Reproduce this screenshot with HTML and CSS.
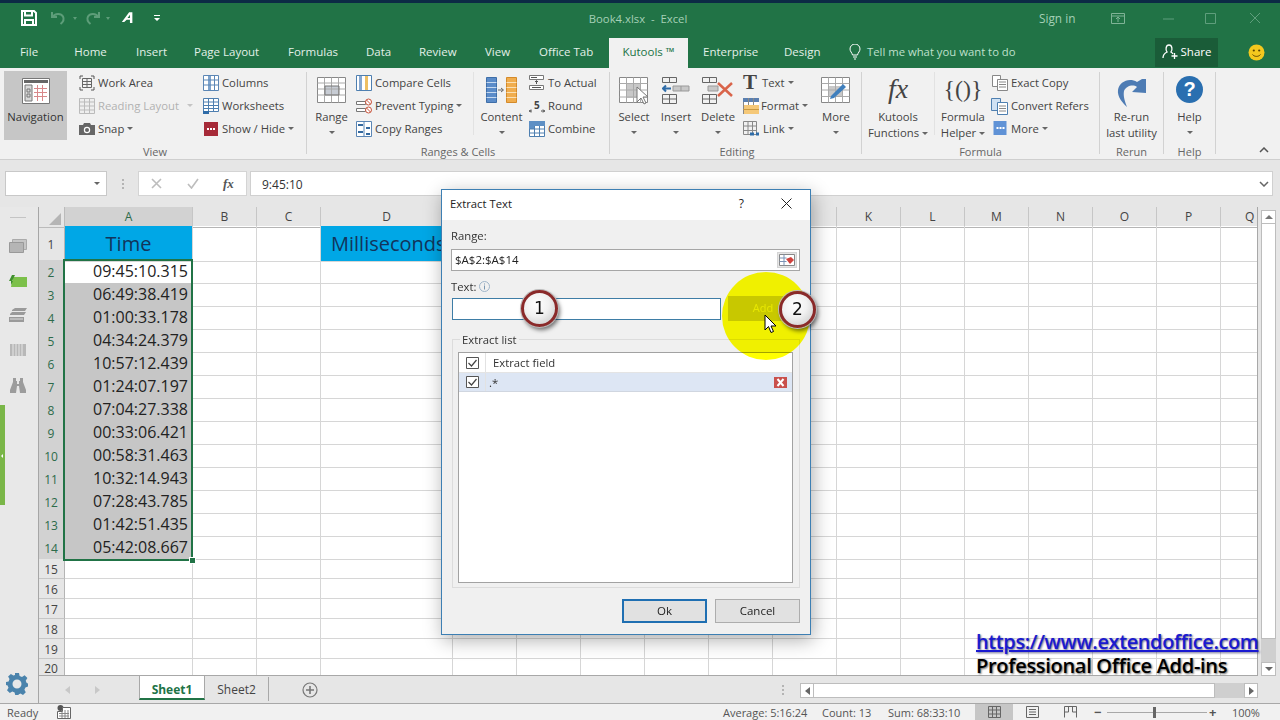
FILE: index.html
```html
<!DOCTYPE html>
<html lang="en">
<head>
<meta charset="utf-8">
<title>Book4.xlsx - Excel</title>
<link rel="stylesheet" href="styles.css">
</head>
<body>
<div class="app">
  <div class="strip"></div>
  <header class="titlebar">
    <div class="qat">
      <svg class="q-save" width="16" height="16" viewBox="0 0 16 16"><path d="M1 1h12l2 2v12H1zM4 1.500v4h7v-4M4 15v-5h8v5" fill="none" stroke="#fff" stroke-width="2"/></svg>
      <svg class="q-undo" width="18" height="16" viewBox="0 0 18 16"><path d="M2 2v5h5M2.500 7C5 3 11 3 13 6.500 14.500 9.500 13 12 10.500 14" fill="none" stroke="#5d9d79" stroke-width="2"/></svg>
      <i class="q-caret dim"></i>
      <svg class="q-redo" width="18" height="16" viewBox="0 0 18 16"><path d="M16 2v5h-5M15.500 7C13 3 7 3 5 6.500 3.500 9.500 5 12 7.500 14" fill="none" stroke="#5d9d79" stroke-width="2"/></svg>
      <i class="q-caret dim"></i>
      <svg class="q-a" width="13" height="14" viewBox="0 0 16 16"><path d="M1 13 10 1h4v13h-3v-4H7l-3 3zM8 8h3V4z" fill="#fff" fill-rule="evenodd"/></svg>
      <svg class="q-more" width="8" height="8" viewBox="0 0 8 8"><path d="M1 1h6v1H1zM1 4h6L4 7z" fill="#fff"/></svg>
    </div>
    <div class="doc">Book4.xlsx&nbsp; - &nbsp;Excel</div>
    <div class="win">
      <span class="signin">Sign in</span>
      <svg class="w1" width="14" height="11" viewBox="0 0 14 11"><path d="M.5.500h13v10H.500zM.5 3h13M7 9V4.500M5 6l2-2 2 2" fill="none" stroke="#7fb396"/></svg>
      <svg class="w2" width="11" height="11" viewBox="0 0 11 11"><path d="M0 6h11" stroke="#5f9e7c"/></svg>
      <svg class="w3" width="11" height="11" viewBox="0 0 11 11"><path d="M.5.500h10v10H.500z" fill="none" stroke="#5f9e7c"/></svg>
      <svg class="w4" width="12" height="12" viewBox="0 0 12 12"><path d="M1 1l10 10M11 1 1 11" stroke="#5f9e7c"/></svg>
    </div>
  </header>
  <nav class="tabs">
    <span class="t t-file">File</span>
    <span class="t t-home">Home</span>
    <span class="t t-ins">Insert</span>
    <span class="t t-pl">Page Layout</span>
    <span class="t t-for">Formulas</span>
    <span class="t t-data">Data</span>
    <span class="t t-rev">Review</span>
    <span class="t t-view">View</span>
    <span class="t t-ot">Office Tab</span>
    <span class="t t-active">Kutools ™</span>
    <span class="t t-ent">Enterprise</span>
    <span class="t t-des">Design</span>
    <svg class="bulb" width="12" height="16" viewBox="0 0 12 16"><path d="M3.500 11C3 8.500 1 7.500 1 5a5 5 0 0 1 10 0c0 2.500-2 3.500-2.500 6zM4 13h4M5 15h2" fill="none" stroke="#fff"/></svg>
    <span class="tell">Tell me what you want to do</span>
    <span class="share"><svg width="16" height="17" viewBox="0 0 16 17"><path d="M1 15c0-4 2-5 4-6C3.500 7.500 3.500 2 7 2s3.500 5.500 2 7c1 .5 1.500 1 2 2M12.500 10v6M9.500 13h6" fill="none" stroke="#fff" stroke-width="1.300"/></svg>Share</span>
    <span class="smile"><svg width="17" height="17" viewBox="0 0 17 17"><circle cx="8.500" cy="8.500" r="8" fill="#f3c81e"/><circle cx="5.800" cy="6.500" r="1.100" fill="#5a4300"/><circle cx="11.200" cy="6.500" r="1.100" fill="#5a4300"/><path d="M4.500 10.500c2 2.500 6 2.500 8 0" fill="none" stroke="#5a4300"/></svg></span>
  </nav>

  <section class="ribbon">
    <div class="group g-view">
      <div class="tools">
        <div class="large l-nav">
          <span class="big"><svg width="28" height="26" viewBox="0 0 28 26"><path fill="#fff" stroke="#777" d="M.5.500h27v25H.500z"/><path fill="#666" d="M2 2h24v3H2z"/><path fill="#d9d9d9" stroke="#777" d="M3 7h7v16H3z"/><path fill="none" stroke="#777" d="M5 11h3v3H5zM5 16h3v3H5z"/><path fill="none" stroke="#d8888a" d="M12 10.500h13M12 14.500h13M12 18.500h13M15.500 7v16M20.500 7v16"/></svg></span>
          <span class="lbl">Navigation</span>
        </div>
        <div class="col c-view1">
          <div class="tool"><svg class="ic" width="16" height="16" viewBox="0 0 16 16"><path d="M1 4V1h3M12 1h3v3M15 12v3h-3M4 15H1v-3" fill="none" stroke="#555"/><path d="M3.500 3.500h9v9h-9zM3.500 6.500h9M3.500 9.500h9M8 3.500v9" fill="none" stroke="#666"/></svg>Work Area</div>
          <div class="tool off"><svg class="ic" width="16" height="16" viewBox="0 0 16 16"><path d="M.5.500h15v15H.500zM.5 8h15M5.500.500v15M10.500.500v15M.5 4h15M.5 12h15" fill="#eee" stroke="#bbb"/></svg>Reading Layout<i class="caret pale wide"></i></div>
          <div class="tool"><svg class="ic" width="16" height="16" viewBox="0 0 16 16"><path d="M0 4h4l1-2h6l1 2h4v10H0z" fill="#666"/><circle cx="8" cy="9" r="3.200" fill="#fff"/><circle cx="8" cy="9" r="2" fill="#666"/></svg>Snap<i class="caret"></i></div>
        </div>
        <div class="col">
          <div class="tool"><svg class="ic" width="16" height="16" viewBox="0 0 16 16"><path fill="#fff" stroke="#5b86b5" d="M.5.500h15v15H.500z"/><path fill="#7ea3cc" d="M5 1h3v14H5z"/><path d="M.5 5h15M.5 10h15M11.500.500v15" stroke="#5b86b5"/></svg>Columns</div>
          <div class="tool"><svg class="ic" width="16" height="16" viewBox="0 0 16 16"><path fill="#fff" stroke="#4e7fb0" d="M.5.500h15v13H.500z"/><path d="M.5 4h15M.5 7.500h15M.5 10.500h15M5.500.500v13M10.500.500v13" stroke="#4e7fb0"/><path fill="#2f6ca8" d="M0 13h6v3H0z"/></svg>Worksheets</div>
          <div class="tool"><svg class="ic" width="16" height="16" viewBox="0 0 16 16"><path fill="#a62a38" d="M1 1h14v14H1z"/><path fill="#fff" d="M4 7h2v2H4zM7 7h2v2H7zM10 7h2v2h-2z"/></svg>Show / Hide<i class="caret"></i></div>
        </div>
      </div>
      <div class="glabel">View</div>
    </div>
    <div class="sep"></div>
    <div class="group g-range">
      <div class="tools">
        <div class="large l-range">
          <span class="big"><svg width="30" height="26" viewBox="0 0 30 26"><path fill="#fff" stroke="#888" d="M.5.500h28v25H.500z"/><path fill="#c7ccd4" d="M8 9h14v9H8z"/><path fill="none" stroke="#aaa" d="M.5 6h28M.5 12h28M.5 18h28M7.500.500v25M14.500.500v25M21.500.500v25"/><path fill="none" stroke="#777" d="M8 9h14v9H8z"/></svg></span>
          <span class="lbl">Range</span>
          <i class="caret block"></i>
        </div>
        <div class="col c-range">
          <div class="tool"><svg class="ic" width="16" height="16" viewBox="0 0 16 16"><path fill="#fff" stroke="#4e7fb0" d="M.5.500h15v15H.500z"/><path fill="#86a7cf" d="M3 1h3v14H3z"/><path fill="#eebf63" d="M9 1h3v14H9z"/></svg>Compare Cells</div>
          <div class="tool"><svg class="ic" width="16" height="16" viewBox="0 0 16 16"><path d="M.5 3.500h9v3h-9zM.5 10.500h9v3h-9z" fill="#fff" stroke="#777"/><circle cx="12.500" cy="4" r="3" fill="#fff" stroke="#c8553d"/><circle cx="12.500" cy="12" r="3" fill="#fff" stroke="#c8553d"/><path d="M10.500 2l4 4M10.500 10l4 4" stroke="#c8553d"/></svg>Prevent Typing<i class="caret"></i></div>
          <div class="tool"><svg class="ic" width="16" height="16" viewBox="0 0 16 16"><path fill="#fff" stroke="#5b86b5" d="M.5.500h15v15H.500z"/><path d="M2 3h5v2H2zM2 10h5v2H2zM10 6h4v2h-4zM10 12h4v2h-4z" fill="#33689e"/><path d="M8 .5v15" stroke="#5b86b5"/></svg>Copy Ranges</div>
        </div>
        <div class="subsep"></div>
        <div class="large l-content">
          <span class="big"><svg width="32" height="26" viewBox="0 0 32 26"><path fill="#5b8cc9" stroke="#3e6ea8" d="M.5.500h10v25H.500z"/><path fill="#f0ad4e" stroke="#d48a2a" d="M20.500.500h10v25h-10z"/><path d="M.5 5.500h10M.5 10.500h10M.5 15.500h10M.5 20.500h10" stroke="#c7daf0"/><path d="M20.500 5.500h10M20.500 10.500h10M20.500 15.500h10M20.500 20.500h10" stroke="#fae0b5"/><path d="M12 13h5M15 11l2.500 2-2.500 2" fill="none" stroke="#666"/></svg></span>
          <span class="lbl">Content</span>
          <i class="caret block"></i>
        </div>
        <div class="col">
          <div class="tool"><svg class="ic" width="16" height="16" viewBox="0 0 16 16"><path d="M.5.500h14v4H.500zM.5 10.500h14v4H.500z" fill="#fff" stroke="#777"/><path d="M2 2.500h6M3 12.500h9" stroke="#555"/><path d="M7.500 6v3M6 7l1.500-1.500L9 7" fill="none" stroke="#555"/></svg>To Actual</div>
          <div class="tool"><svg class="ic" width="16" height="16" viewBox="0 0 16 16"><text x="5" y="11" class="five">5</text><path d="M0 13h3M2 11.500 .5 13 2 14.500M12 13h4M14 11.500l1.500 1.500-1.500 1.500" fill="none" stroke="#444"/></svg>Round</div>
          <div class="tool"><svg class="ic" width="16" height="16" viewBox="0 0 16 16"><path fill="#fff" stroke="#4e7fb0" d="M.5.500h15v15H.500z"/><path fill="#5e8fc4" d="M0 0h16v5H0zM0 5h6v3H0z"/><path d="M.5 8h15M.5 12h15M5.500 5v11M10.500 5v11" stroke="#4e7fb0"/></svg>Combine</div>
        </div>
      </div>
      <div class="glabel">Ranges &amp; Cells</div>
    </div>
    <div class="sep"></div>
    <div class="group g-edit">
      <div class="tools">
        <div class="large l-edit">
          <span class="big"><svg width="30" height="28" viewBox="0 0 30 28"><path fill="#fff" stroke="#888" d="M.5.500h28v25H.500z"/><path fill="#c8c8c8" d="M8 7h13v14H8z"/><path fill="none" stroke="#aaa" d="M.5 6.500h28M.5 13h28M.5 20h28M7.500.500v25M14.500.500v25M21.500.500v25"/><path d="M18 10v15l4-4 3 6 2-1-3-6h5z" fill="#fff" stroke="#777"/></svg></span>
          <span class="lbl">Select</span>
          <i class="caret block"></i>
        </div>
        <div class="large l-edit">
          <span class="big"><svg width="28" height="28" viewBox="0 0 28 28"><path fill="none" stroke="#666" d="M.5.500h14v5H.500zM7.500.500v5M.5 17.500h14v9H.500zM.5 22h14M7.500 17.500v9"/><path d="M11 9h16v5H11z" fill="#c8c8c8" stroke="#999"/><path d="M19 9v5" stroke="#999"/><path d="M9 11.500H1M4 8.500l-3 3 3 3" fill="none" stroke="#2f6ca8" stroke-width="2"/></svg></span>
          <span class="lbl">Insert</span>
          <i class="caret block"></i>
        </div>
        <div class="large l-edit">
          <span class="big"><svg width="32" height="28" viewBox="0 0 32 28"><path fill="none" stroke="#666" d="M.5.500h14v5H.500zM7.500.500v5M.5 17.500h14v9H.500zM.5 22h14M7.500 17.500v9"/><path d="M6 9h10v5H6z" fill="#c8c8c8" stroke="#999"/><path d="M16 6l14 13M30 6 16 19" stroke="#d9644a" stroke-width="2.500"/></svg></span>
          <span class="lbl">Delete</span>
          <i class="caret block"></i>
        </div>
        <div class="col c-edit">
          <div class="tool"><span class="bigt">T</span>Text<i class="caret"></i></div>
          <div class="tool"><svg class="ic ic-w" width="16" height="16" viewBox="0 0 16 16"><path fill="#f5c878" d="M0 0h16v16H0z"/><path fill="#5a7fb0" d="M0 0h16v4H0z"/><path fill="#fff" d="M0 4h16v3H0z"/><path d="M.5 4v12M5.500 0v7M10.500 0v7" stroke="#888"/><path d="M0 11.500h16" stroke="#c99a42"/></svg>Format<i class="caret"></i></div>
          <div class="tool"><svg class="ic ic-w" width="18" height="16" viewBox="0 0 18 16"><path fill="none" stroke="#888" d="M.5.500h13v13H.500zM.5 5h13M.5 9.500h13M5 .500v13M9.500 .500v13"/><path d="M7 13h4M13 13h3" stroke="#2f6ca8" stroke-width="3"/></svg>Link<i class="caret"></i></div>
        </div>
        <div class="large l-more">
          <span class="big"><svg width="30" height="26" viewBox="0 0 30 26"><path fill="#fff" stroke="#888" d="M.5.500h28v25H.500z"/><path fill="#c8c8c8" d="M8 9h14v10H8z"/><path fill="none" stroke="#aaa" d="M.5 6.500h28M.5 13h28M.5 19.500h28M7.500.500v25M14.500.500v25M21.500.500v25"/><path d="M10 19l12-12 3 3-12 11-4 1z" fill="#3f7fbd"/></svg></span>
          <span class="lbl">More</span>
          <i class="caret block"></i>
        </div>
      </div>
      <div class="glabel">Editing</div>
    </div>
    <div class="sep"></div>
    <div class="group g-formula">
      <div class="tools">
        <div class="large l-fn">
          <span class="big big-fx">fx</span>
          <span class="lbl">Kutools</span>
          <span class="lbl">Functions<i class="caret"></i></span>
        </div>
        <div class="subsep"></div>
        <div class="large l-fh">
          <span class="big big-br">{()}</span>
          <span class="lbl">Formula</span>
          <span class="lbl">Helper<i class="caret"></i></span>
        </div>
        <div class="col">
          <div class="tool tool-f"><svg class="ic ic-w2" width="16" height="16" viewBox="0 0 16 16"><path d="M.5.500h8v11H.500z" fill="#fff" stroke="#888"/><path d="M5.500 4.500h10v11h-10z" fill="#fff" stroke="#888"/><path d="M7 7h7M7 9.500h7M7 12h7" stroke="#888"/></svg>Exact Copy</div>
          <div class="tool tool-f"><svg class="ic ic-w2" width="18" height="18" viewBox="0 0 18 18"><path d="M.5 1.500h9v12H.500z" fill="#cfe1f3" stroke="#4e7fb0"/><path d="M6.500 5.500h10v12h-10z" fill="#fff" stroke="#4e7fb0"/><path d="M8 9h7M8 11.500h7M8 14h7" stroke="#888"/></svg>Convert Refers</div>
          <div class="tool tool-f"><svg class="ic ic-w2" width="15" height="15" viewBox="0 0 15 15"><path fill="#5f92d6" d="M1 0h13v14H1z"/><path fill="#fff" d="M4 6h2v2H4zM7 6h2v2H7zM10 6h2v2h-2z"/></svg>More<i class="caret"></i></div>
        </div>
      </div>
      <div class="glabel">Formula</div>
    </div>
    <div class="sep"></div>
    <div class="group g-rerun">
      <div class="tools">
        <div class="large l-full">
          <span class="big"><svg width="32" height="32" viewBox="0 0 32 32"><path d="M11 30C7 26 1 20 2 13 3 5 13 0 21 5l5-3 4 0v14l-14-1 5-5C17 7 10 9 8 14c-1 5 1 11 3 16z" fill="#4e7cb4"/></svg></span>
          <span class="lbl">Re-run</span>
          <span class="lbl">last utility</span>
        </div>
      </div>
      <div class="glabel">Rerun</div>
    </div>
    <div class="sep"></div>
    <div class="group g-help">
      <div class="tools">
        <div class="large l-full">
          <span class="big"><span class="qmark">?</span></span>
          <span class="lbl">Help</span>
          <i class="caret block"></i>
        </div>
      </div>
      <div class="glabel">Help</div>
    </div>
    <div class="sep"></div>
    <div class="collapse"><svg width="10" height="6" viewBox="0 0 10 6"><path d="M1 5l4-4 4 4" fill="none" stroke="#555" stroke-width="1.500"/></svg></div>
  </section>

  <section class="fbar">
    <div class="namebox"><i class="caret"></i></div>
    <div class="dots"><i></i><i></i><i></i></div>
    <div class="fxbox">
      <svg width="11" height="11" viewBox="0 0 11 11"><path d="M1 1l9 9M10 1 1 10" stroke="#bdbdbd" stroke-width="1.600"/></svg>
      <svg width="12" height="11" viewBox="0 0 12 11"><path d="M1 6l3.500 4L11 1" fill="none" stroke="#bdbdbd" stroke-width="1.600"/></svg>
      <span class="fxt">fx</span>
    </div>
    <div class="finput"><span>9:45:10</span><svg width="10" height="6" viewBox="0 0 10 6"><path d="M1 1l4 4 4-4" fill="none" stroke="#666" stroke-width="1.500"/></svg></div>
  </section>

  <main class="work">
    <aside class="side">
      <div class="sdash"></div>
      <svg class="s1" width="18" height="14" viewBox="0 0 18 14"><path fill="#c6c6c6" stroke="#aaa" d="M3.500.500h14v10h-14z"/><path fill="#b5b5b5" stroke="#999" d="M.5 3.500h14v10H.500z"/></svg>
      <svg class="s2" width="18" height="12" viewBox="0 0 18 12"><path fill="#7cc04a" d="M4 2h14v10H2z"/><path fill="#3f8f2e" d="M0 6 3 0h3L3 6l1 0-2 4 0-4z"/></svg>
      <svg class="s3" width="18" height="14" viewBox="0 0 18 14"><path fill="#9a9a9a" d="M3 2 6 0h12l-2 3H3zM1 6l2-2h14l-2 3H1zM0 9h15v5H0z"/><path d="M1 11h13" stroke="#ddd"/></svg>
      <svg class="s4" width="16" height="12" viewBox="0 0 16 12"><path fill="#b8b8b8" d="M0 0h16v12H0z"/><path d="M3 0v12M6 0v12M9 0v12M12 0v12" stroke="#e6e6e6"/></svg>
      <svg class="s5" width="16" height="15" viewBox="0 0 16 15"><path fill="#9c9c9c" d="M3 0h3v3h1v3h2V3h1V0h3v4l3 8v3h-6l-1-7H7l-1 7H0v-3l3-8z"/></svg>
      <div class="handle"><i></i></div>
      <svg class="gear" width="22" height="22" viewBox="0 0 22 22"><path fill="#4a83ac" fill-rule="evenodd" d="M9 0h4l.6 3 2.400 1 2.600-1.700 2.800 2.800L19.700 7.700 20.700 10 22 10.500v3l-2.600.9-1 2.400 1.400 2.500-2.800 2.700-2.500-1.500-2.100.9L12.800 22H9.200l-.6-2.600-2.300-.9-2.500 1.500L1 17.300l1.500-2.500-.9-2.200L0 12V9l2.600-.6.900-2.300L2.100 3.600 4.900.900l2.500 1.500L9 2zM11 6.500a4.500 4.500 0 1 0 0 9 4.500 4.500 0 0 0 0-9z"/></svg>
    </aside>
    <div class="center">
      <div class="gridarea">
        <div class="grid">
          <div class="row r-head">
            <div class="corner"><i></i></div>
            <div class="ch ch-sel">A</div><div class="ch">B</div><div class="ch">C</div><div class="ch">D</div><div class="ch">E</div><div class="ch">F</div><div class="ch">G</div><div class="ch">H</div><div class="ch">I</div><div class="ch">J</div><div class="ch">K</div><div class="ch">L</div><div class="ch">M</div><div class="ch">N</div><div class="ch">O</div><div class="ch">P</div><div class="ch ch-q">Q</div>
          </div>
          <div class="row r-tall"><div class="rh">1</div><div class="c head-cell">Time</div><div class="c"></div><div class="c"></div><div class="c head-cell hc-left">Milliseconds</div><div class="c"></div><div class="c"></div><div class="c"></div><div class="c"></div><div class="c"></div><div class="c"></div><div class="c"></div><div class="c"></div><div class="c"></div><div class="c"></div><div class="c"></div><div class="c"></div><div class="c"></div></div>
          <div class="row r-data"><div class="rh sel">2</div><div class="c t-cell">09:45:10.315</div><div class="c"></div><div class="c"></div><div class="c"></div><div class="c"></div><div class="c"></div><div class="c"></div><div class="c"></div><div class="c"></div><div class="c"></div><div class="c"></div><div class="c"></div><div class="c"></div><div class="c"></div><div class="c"></div><div class="c"></div><div class="c"></div></div>
          <div class="row r-data"><div class="rh sel">3</div><div class="c t-cell shade">06:49:38.419</div><div class="c"></div><div class="c"></div><div class="c"></div><div class="c"></div><div class="c"></div><div class="c"></div><div class="c"></div><div class="c"></div><div class="c"></div><div class="c"></div><div class="c"></div><div class="c"></div><div class="c"></div><div class="c"></div><div class="c"></div><div class="c"></div></div>
          <div class="row r-data"><div class="rh sel">4</div><div class="c t-cell shade">01:00:33.178</div><div class="c"></div><div class="c"></div><div class="c"></div><div class="c"></div><div class="c"></div><div class="c"></div><div class="c"></div><div class="c"></div><div class="c"></div><div class="c"></div><div class="c"></div><div class="c"></div><div class="c"></div><div class="c"></div><div class="c"></div><div class="c"></div></div>
          <div class="row r-data"><div class="rh sel">5</div><div class="c t-cell shade">04:34:24.379</div><div class="c"></div><div class="c"></div><div class="c"></div><div class="c"></div><div class="c"></div><div class="c"></div><div class="c"></div><div class="c"></div><div class="c"></div><div class="c"></div><div class="c"></div><div class="c"></div><div class="c"></div><div class="c"></div><div class="c"></div><div class="c"></div></div>
          <div class="row r-data"><div class="rh sel">6</div><div class="c t-cell shade">10:57:12.439</div><div class="c"></div><div class="c"></div><div class="c"></div><div class="c"></div><div class="c"></div><div class="c"></div><div class="c"></div><div class="c"></div><div class="c"></div><div class="c"></div><div class="c"></div><div class="c"></div><div class="c"></div><div class="c"></div><div class="c"></div><div class="c"></div></div>
          <div class="row r-data"><div class="rh sel">7</div><div class="c t-cell shade">01:24:07.197</div><div class="c"></div><div class="c"></div><div class="c"></div><div class="c"></div><div class="c"></div><div class="c"></div><div class="c"></div><div class="c"></div><div class="c"></div><div class="c"></div><div class="c"></div><div class="c"></div><div class="c"></div><div class="c"></div><div class="c"></div><div class="c"></div></div>
          <div class="row r-data"><div class="rh sel">8</div><div class="c t-cell shade">07:04:27.338</div><div class="c"></div><div class="c"></div><div class="c"></div><div class="c"></div><div class="c"></div><div class="c"></div><div class="c"></div><div class="c"></div><div class="c"></div><div class="c"></div><div class="c"></div><div class="c"></div><div class="c"></div><div class="c"></div><div class="c"></div><div class="c"></div></div>
          <div class="row r-data"><div class="rh sel">9</div><div class="c t-cell shade">00:33:06.421</div><div class="c"></div><div class="c"></div><div class="c"></div><div class="c"></div><div class="c"></div><div class="c"></div><div class="c"></div><div class="c"></div><div class="c"></div><div class="c"></div><div class="c"></div><div class="c"></div><div class="c"></div><div class="c"></div><div class="c"></div><div class="c"></div></div>
          <div class="row r-data"><div class="rh sel">10</div><div class="c t-cell shade">00:58:31.463</div><div class="c"></div><div class="c"></div><div class="c"></div><div class="c"></div><div class="c"></div><div class="c"></div><div class="c"></div><div class="c"></div><div class="c"></div><div class="c"></div><div class="c"></div><div class="c"></div><div class="c"></div><div class="c"></div><div class="c"></div><div class="c"></div></div>
          <div class="row r-data"><div class="rh sel">11</div><div class="c t-cell shade">10:32:14.943</div><div class="c"></div><div class="c"></div><div class="c"></div><div class="c"></div><div class="c"></div><div class="c"></div><div class="c"></div><div class="c"></div><div class="c"></div><div class="c"></div><div class="c"></div><div class="c"></div><div class="c"></div><div class="c"></div><div class="c"></div><div class="c"></div></div>
          <div class="row r-data"><div class="rh sel">12</div><div class="c t-cell shade">07:28:43.785</div><div class="c"></div><div class="c"></div><div class="c"></div><div class="c"></div><div class="c"></div><div class="c"></div><div class="c"></div><div class="c"></div><div class="c"></div><div class="c"></div><div class="c"></div><div class="c"></div><div class="c"></div><div class="c"></div><div class="c"></div><div class="c"></div></div>
          <div class="row r-data"><div class="rh sel">13</div><div class="c t-cell shade">01:42:51.435</div><div class="c"></div><div class="c"></div><div class="c"></div><div class="c"></div><div class="c"></div><div class="c"></div><div class="c"></div><div class="c"></div><div class="c"></div><div class="c"></div><div class="c"></div><div class="c"></div><div class="c"></div><div class="c"></div><div class="c"></div><div class="c"></div></div>
          <div class="row r-data"><div class="rh sel">14</div><div class="c t-cell shade">05:42:08.667</div><div class="c"></div><div class="c"></div><div class="c"></div><div class="c"></div><div class="c"></div><div class="c"></div><div class="c"></div><div class="c"></div><div class="c"></div><div class="c"></div><div class="c"></div><div class="c"></div><div class="c"></div><div class="c"></div><div class="c"></div><div class="c"></div></div>
          <div class="row r-plain"><div class="rh">15</div><div class="c"></div><div class="c"></div><div class="c"></div><div class="c"></div><div class="c"></div><div class="c"></div><div class="c"></div><div class="c"></div><div class="c"></div><div class="c"></div><div class="c"></div><div class="c"></div><div class="c"></div><div class="c"></div><div class="c"></div><div class="c"></div><div class="c"></div></div>
          <div class="row r-plain"><div class="rh">16</div><div class="c"></div><div class="c"></div><div class="c"></div><div class="c"></div><div class="c"></div><div class="c"></div><div class="c"></div><div class="c"></div><div class="c"></div><div class="c"></div><div class="c"></div><div class="c"></div><div class="c"></div><div class="c"></div><div class="c"></div><div class="c"></div><div class="c"></div></div>
          <div class="row r-plain"><div class="rh">17</div><div class="c"></div><div class="c"></div><div class="c"></div><div class="c"></div><div class="c"></div><div class="c"></div><div class="c"></div><div class="c"></div><div class="c"></div><div class="c"></div><div class="c"></div><div class="c"></div><div class="c"></div><div class="c"></div><div class="c"></div><div class="c"></div><div class="c"></div></div>
          <div class="row r-plain"><div class="rh">18</div><div class="c"></div><div class="c"></div><div class="c"></div><div class="c"></div><div class="c"></div><div class="c"></div><div class="c"></div><div class="c"></div><div class="c"></div><div class="c"></div><div class="c"></div><div class="c"></div><div class="c"></div><div class="c"></div><div class="c"></div><div class="c"></div><div class="c"></div></div>
          <div class="row r-plain"><div class="rh">19</div><div class="c"></div><div class="c"></div><div class="c"></div><div class="c"></div><div class="c"></div><div class="c"></div><div class="c"></div><div class="c"></div><div class="c"></div><div class="c"></div><div class="c"></div><div class="c"></div><div class="c"></div><div class="c"></div><div class="c"></div><div class="c"></div><div class="c"></div></div>
          <div class="row r-plain r-last"><div class="rh">20</div><div class="c"></div><div class="c"></div><div class="c"></div><div class="c"></div><div class="c"></div><div class="c"></div><div class="c"></div><div class="c"></div><div class="c"></div><div class="c"></div><div class="c"></div><div class="c"></div><div class="c"></div><div class="c"></div><div class="c"></div><div class="c"></div><div class="c"></div></div>
          <div class="selection"><i></i></div>
        </div>
        <div class="vscroll">
          <div class="sb-btn"><i class="tri-up"></i></div>
          <div class="sb-thumb"></div>
          <div class="sb-rest"></div>
          <div class="sb-btn"><i class="caret"></i></div>
        </div>
      </div>
      <div class="tabbar">
        <div class="tnav"><i class="tl"></i><i class="tr"></i></div>
        <div class="sheet on">Sheet1</div>
        <div class="sheet">Sheet2</div>
        <svg class="addsheet" width="16" height="16" viewBox="0 0 16 16"><circle cx="8" cy="8" r="7" fill="none" stroke="#777" stroke-width="1.200"/><path d="M8 4v8M4 8h8" stroke="#777" stroke-width="1.600"/></svg>
        <div class="dots dots-h"><i></i><i></i><i></i></div>
        <div class="hscroll">
          <div class="hb"><i class="tl dk"></i></div>
          <div class="hthumb"></div>
          <div class="hb"><i class="tr dk"></i></div>
        </div>
      </div>
    </div>
  </main>

  <footer class="status">
    <span class="ready">Ready</span>
    <svg class="macro" width="14" height="14" viewBox="0 0 14 14"><circle cx="3.500" cy="3" r="3" fill="#555"/><path fill="#fff" stroke="#666" d="M5.500 2.500h8v11h-13v-7h5z"/><path d="M2 8.500h10M2 11h10M5 7v6M8 5v8M11 5v8" stroke="#888"/></svg>
    <span class="st s-avg">Average: 5:16:24</span>
    <span class="st s-cnt">Count: 13</span>
    <span class="st s-sum">Sum: 68:33:10</span>
    <span class="vbtn on"><svg width="13" height="12" viewBox="0 0 13 12"><path d="M.5.500h12v11H.500zM.5 4h12M.5 8h12M4.500.500v11M8.500.500v11" fill="none" stroke="#666"/></svg></span>
    <span class="vbtn"><svg width="13" height="12" viewBox="0 0 13 12"><path d="M.5.500h12v11H.500zM3 3.500h7M3 6h7M3 8.500h7" fill="none" stroke="#666"/></svg></span>
    <span class="vbtn"><svg width="13" height="12" viewBox="0 0 13 12"><path d="M.5 11.500V.500h12v11M.5 6h4V.500M8.500.500V6h4" fill="none" stroke="#666"/></svg></span>
    <span class="zm">−</span>
    <span class="slider"><i></i></span>
    <span class="zm zp">+</span>
    <span class="st s-pct">100%</span>
  </footer>

  <section class="dialog">
    <div class="d-title">
      <span class="d-name">Extract Text</span>
      <span class="d-q">?</span>
      <svg width="11" height="11" viewBox="0 0 11 11"><path d="M.5.500l10 10M10.500.500l-10 10" stroke="#222"/></svg>
    </div>
    <div class="d-body">
      <div class="d-label">Range:</div>
      <div class="d-range">$A$2:$A$14
        <span class="d-rbtn"><svg width="16" height="12" viewBox="0 0 16 12"><path fill="#fff" stroke="#888" d="M.5.500h15v11H.500z"/><path d="M.5 4h7M.5 7.500h7M5 .500v11" stroke="#7a93b5"/><path d="M7 5l5-2 3 3-4 4z" fill="#d0413c"/></svg></span>
      </div>
      <div class="d-label d-text">Text: <svg width="11" height="11" viewBox="0 0 11 11"><circle cx="5.500" cy="5.500" r="5" fill="none" stroke="#9fb4c8"/><path d="M5.500 4.500v4M5.500 2.500v1" stroke="#7a97b0"/></svg></div>
      <div class="d-addrow">
        <div class="d-input"></div>
        <div class="d-add">Add</div>
      </div>
      <fieldset class="d-group">
        <legend>Extract list</legend>
        <div class="d-list">
          <div class="d-row">
            <span class="d-chk"><svg width="13" height="12" viewBox="0 0 13 12"><path fill="#fff" stroke="#555" d="M.5.500h12v11H.500z"/><path d="M2.500 6l3 3 5-6" fill="none" stroke="#444" stroke-width="1.200"/></svg></span>
            <span class="d-val">Extract field</span>
          </div>
          <div class="d-row hi">
            <span class="d-chk"><svg width="13" height="12" viewBox="0 0 13 12"><path fill="#fff" stroke="#555" d="M.5.500h12v11H.500z"/><path d="M2.500 6l3 3 5-6" fill="none" stroke="#444" stroke-width="1.200"/></svg></span>
            <span class="d-val d-pat">.*</span>
            <svg class="d-x" width="13" height="11" viewBox="0 0 13 11"><path fill="#c9504c" d="M0 0h13v11H0z"/><path d="M3.500 2l6 7M9.500 2l-6 7" stroke="#fff" stroke-width="2"/></svg>
          </div>
        </div>
      </fieldset>
      <div class="d-btns">
        <div class="d-btn primary">Ok</div>
        <div class="d-btn">Cancel</div>
      </div>
    </div>
    <div class="hilite"></div>
    <div class="num n1">1</div>
    <div class="num n2">2</div>
    <svg class="cursor" width="14" height="20" viewBox="0 0 14 20"><path d="M1 1v15l3.500-3.500L7 18.500l2.500-1L7 12h5z" fill="#fff" stroke="#000"/></svg>
  </section>

  <aside class="brand">
    <a class="b-url">https://www.extendoffice.com</a>
    <div class="b-sub">Professional Office Add-ins</div>
  </aside>
</div>
</body>
</html>
```
FILE: styles.css
```css
* { box-sizing: border-box; }
html, body { margin: 0; padding: 0; }
body { font-family: "Open Sans", "Liberation Sans", sans-serif; font-size: 11.3px; color: #444; background: #f1f1f1; }
i { display: block; font-style: normal; }
.app { position: relative; width: 1280px; height: 720px; overflow: hidden; display: flex; flex-direction: column; }
.strip { height: 3px; background: #0c2a45; }

/* title */
.titlebar { height: 35px; background: #217346; display: flex; align-items: center; position: relative; padding-bottom: 5px; }
.qat { display: flex; align-items: center; padding-left: 21px; width: 407px; flex: none; }
.q-undo { margin-left: 13px; }
.q-redo { margin-left: 6px; }
.q-a { margin-left: 11px; }
.q-more { margin-left: 19px; }
.q-caret { width: 0; height: 0; margin-left: 5px; border: 2.500px solid transparent; border-top: 3px solid #5d9d79; border-bottom: 0; }
.doc { width: 462px; flex: none; text-align: center; color: #a5d0b6; font-size: 11.300px; }
.win { flex: 1; display: flex; align-items: center; padding-left: 170px; color: #a5d0b6; font-size: 11.800px; }
.w1 { margin-left: 36px; }
.w2 { margin-left: 38px; }
.w3 { margin-left: 31px; }
.w4 { margin-left: 33px; }

/* tabs */
.tabs { height: 30px; background: #217346; color: #e3f0e8; font-size: 11.500px; display: flex; align-items: center; }
.t { display: block; flex: none; height: 30px; line-height: 28px; text-align: center; white-space: nowrap; }
.t-file { width: 58px; }
.t-home { width: 33px; margin-left: 16px; }
.t-ins { width: 29px; margin-left: 29px; }
.t-pl { width: 65px; margin-left: 29px; }
.t-for { width: 49px; margin-left: 29px; }
.t-data { width: 24px; margin-left: 29px; }
.t-rev { width: 37px; margin-left: 29px; }
.t-view { width: 25px; margin-left: 29px; }
.t-ot { width: 54px; margin-left: 29px; }
.t-active { width: 79px; margin-left: 16px; background: #f1f1f1; color: #217346; }
.t-ent { width: 52px; margin-left: 15px; }
.t-des { width: 36px; margin-left: 29px; }
.bulb { margin-left: 29px; flex: none; margin-bottom: 2px; }
.tell { margin-left: 6px; width: 288px; flex: none; color: #bfe0cc; line-height: 28px; height: 30px; font-size: 11.300px; }
.share { width: 63px; height: 29px; background: #1a5c38; display: flex; align-items: center; justify-content: center; gap: 3px; color: #fff; flex: none; margin-bottom: 1px; padding-bottom: 2px; }
.smile { margin-left: 30px; display: flex; margin-bottom: 2px; }

/* ribbon */
.ribbon { height: 92px; background: #f1f1f1; border-bottom: 1px solid #cfcfcf; display: flex; flex: none; }
.group { display: flex; flex-direction: column; flex: none; }
.tools { height: 76px; display: flex; }
.glabel { text-align: center; line-height: 14px; color: #666; font-size: 11px; padding-top: 2px; }
.sep { width: 1px; margin: 4px 0 5px; background: #d2d2d2; flex: none; }
.subsep { width: 1px; margin: 4px 0 8px; background: #e2e2e2; flex: none; }
.g-view { width: 306px; padding-left: 4px; }
.g-range { width: 302px; }
.g-edit { width: 251px; padding-left: 3px; }
.g-formula { width: 237px; }
.g-rerun { width: 63px; }
.g-help { width: 51px; }
.large { display: flex; flex-direction: column; align-items: center; padding-top: 3px; flex: none; }
.big { height: 38px; display: flex; justify-content: center; align-items: flex-start; padding-top: 6px; }
.lbl { line-height: 16px; white-space: nowrap; display: flex; align-items: center; }
.l-nav { width: 63px; height: 69px; margin-top: 3px; padding-top: 0; background: #c6c6c6; color: #333; }
.l-nav .big { padding-top: 7px; }
.l-range { width: 49px; }
.l-content { width: 55px; }
.l-edit { width: 42px; }
.l-more { width: 46px; }
.l-fn { width: 72px; }
.l-fh { width: 56px; }
.l-full { width: 100%; }
.col { display: flex; flex-direction: column; padding-top: 3px; flex: none; }
.c-view1 { width: 124px; margin-left: 12px; }
.c-range { width: 117px; }
.c-edit { width: 70px; margin-left: 4px; }
.tool { height: 23px; display: flex; align-items: center; white-space: nowrap; }
.ic { margin-right: 3px; flex: none; }
.ic-w { margin-right: 2px; }
.ic-w2 { margin-right: 2px; }
.tool-f .ic-w2 { width: 18px; }
.off { color: #b2b2b2; }
.caret { width: 0; height: 0; flex: none; margin-left: 3px; border-style: solid; border-color: #666 transparent transparent; border-width: 3px 3px 0; }
.caret.pale { border-top-color: #c4c4c4; }
.caret.wide { margin-left: 8px; }
.caret.block { margin: 6px 0 0; }
.five { font: 700 10px "Open Sans", sans-serif; fill: #444; }
.bigt { font: 700 21px "Liberation Serif", serif; color: #444; width: 17px; line-height: 23px; margin-right: 2px; }
.big-fx { font: italic 28px/30px "Liberation Serif", serif; color: #444; padding-top: 3px; }
.big-br { font: 24px/30px "Liberation Serif", serif; color: #444; padding-top: 3px; }
.qmark { width: 27px; height: 27px; border-radius: 50%; background: #2a6fb0; color: #fff; font: 700 20px/27px "Liberation Sans", sans-serif; text-align: center; margin-top: -1px; }
.collapse { flex: 1; display: flex; justify-content: flex-end; align-items: flex-end; padding: 0 11px 6px 0; }

/* formula bar */
.fbar { height: 47px; flex: none; background: #e6e6e6; display: flex; align-items: flex-start; padding: 11px 7px 0 5px; }
.namebox { width: 102px; height: 25px; background: #fff; border: 1px solid #c8c8c8; display: flex; align-items: center; justify-content: flex-end; padding-right: 6px; }
.dots { width: 31px; height: 25px; display: flex; flex-direction: column; align-items: center; justify-content: center; gap: 2px; }
.dots i { width: 2px; height: 2px; background: #b4b4b4; }
.fxbox { width: 109px; height: 25px; background: #fff; border: 1px solid #d4d4d4; display: flex; align-items: center; padding-left: 12px; gap: 25px; }
.fxt { font: italic 700 13px "Liberation Serif", serif; color: #555; margin-left: -1px; }
.finput { width: 1023px; height: 25px; margin-left: 3px; background: #fff; border: 1px solid #d0d0d0; display: flex; align-items: center; justify-content: space-between; padding: 1px 3px 0 11px; font-size: 12px; color: #333; }

/* work */
.work { height: 497px; flex: none; display: flex; border-bottom: 1px solid #a8a8a8; }
.side { width: 39px; flex: none; background: #e8e8e8; border-right: 1px solid #a6a6a6; position: relative; display: flex; flex-direction: column; align-items: center; padding-right: 3px; }
.sdash { width: 16px; height: 1px; background: #c4c4c4; margin-top: 10px; }
.s1 { margin-top: 21px; }
.s2 { margin-top: 22px; }
.s3 { margin-top: 21px; }
.s4 { margin-top: 22px; }
.s5 { margin-top: 22px; }
.handle { position: absolute; left: 0; top: 198px; width: 5px; height: 100px; background: #7ab648; }
.handle i { margin: 49px 0 0 1px; width: 0; height: 0; border: 2px solid transparent; border-right-color: #fff; border-left: 0; }
.gear { position: absolute; left: 6px; top: 466px; }
.center { flex: 1; display: flex; flex-direction: column; min-width: 0; }
.gridarea { height: 469px; flex: none; display: flex; }
.grid { width: 1219px; height: 469px; flex: none; overflow: hidden; position: relative; background: #fff; border-right: 1px solid #a8a8a8; border-bottom: 1px solid #a8a8a8; }
.row { display: grid; grid-template-columns: 26px 128px 64px 64px 132px repeat(11, 64px) 64px 64px; }
.r-head { height: 19px; background: #e6e6e6; }
.r-tall { height: 34px; }
.r-data { height: 23px; }
.r-plain { height: 20px; }
.corner { border-right: 1px solid #bbb; border-bottom: 1px solid #bbb; position: relative; background: #e6e6e6; }
.corner i { position: absolute; right: 3px; bottom: 2px; width: 0; height: 0; border-style: solid; border-width: 0 0 12px 12px; border-color: transparent transparent #b5b5b5; }
.ch { text-align: center; line-height: 19px; font-size: 12px; color: #444; border-right: 1px solid #c6c6c6; border-bottom: 1px solid #b5b5b5; }
.ch-sel { background: #d2d2d2; color: #2d6b4a; border-bottom: 2px solid #217346; }
.ch-q { text-align: left; padding-left: 24px; border-right: 0; }
.rh { background: #e6e6e6; border-right: 1px solid #b5b5b5; border-bottom: 1px solid #c6c6c6; text-align: center; font-size: 12px; color: #444; display: flex; align-items: center; justify-content: center; padding: 1px 1px 0 0; }
.r-plain .rh { padding-top: 2px; }
.r-last .rh { padding-top: 0; }
.rh.sel { background: #d2d2d2; color: #2d6b4a; }
.c { border-right: 1px solid #d6d6d6; border-bottom: 1px solid #d6d6d6; min-width: 0; }
.head-cell { background: #00a7e6; color: #12355b; font-size: 20px; line-height: 35px; text-align: center; border-color: #d6d6d6; }
.hc-left { text-align: left; padding-left: 10px; white-space: nowrap; overflow: hidden; }
.t-cell { font-size: 16px; line-height: 23px; text-align: right; padding-right: 4px; color: #222; }
.shade { background: #c6c6c6; }
.selection { position: absolute; left: 24px; top: 52px; width: 130px; height: 302px; border: 2px solid #217346; }
.selection i { position: absolute; right: -5px; bottom: -5px; width: 7px; height: 7px; background: #217346; border: 1px solid #fff; }
.vscroll { flex: 1; display: flex; flex-direction: column; padding: 3px 4px 0 3px; background: #e6e6e6; }
.sb-btn { height: 14px; background: #fff; border: 1px solid #bdbdbd; display: flex; align-items: center; justify-content: center; flex: none; }
.tri-up { width: 0; height: 0; border-style: solid; border-width: 0 4px 4px; border-color: transparent transparent #777; }
.sb-btn .caret { margin: 0; border-width: 4px 4px 0; }
.sb-thumb { height: 415px; background: #fff; border: 1px solid #bdbdbd; border-top: 0; flex: none; }
.sb-rest { height: 23px; background: #cfcfcf; flex: none; }

/* sheets */
.tabbar { flex: 1; display: flex; background: #e6e6e6; align-items: flex-start; min-height: 0; }
.tnav { width: 100px; height: 27px; display: flex; align-items: center; padding-left: 26px; gap: 25px; }
.tl { width: 0; height: 0; border-style: solid; border-width: 4px 5px 4px 0; border-color: transparent #c8c8c8 transparent transparent; }
.tr { width: 0; height: 0; border-style: solid; border-width: 4px 0 4px 5px; border-color: transparent transparent transparent #c8c8c8; }
.tl.dk { border-right-color: #666; }
.tr.dk { border-left-color: #666; }
.sheet { width: 64px; height: 24px; line-height: 26px; text-align: center; font-size: 12px; color: #444; border-right: 1px solid #a8a8a8; margin-top: 1px; }
.sheet.on { width: 66px; height: 24px; margin-top: 0; background: #fff; color: #217346; font-weight: 700; border: 0; border-left: 1px solid #a8a8a8; border-right: 1px solid #a8a8a8; border-bottom: 2px solid #217346; line-height: 27px; }
.addsheet { margin: 6px 0 0 33px; flex: none; }
.dots-h { width: 20px; margin-left: 455px; height: 27px; }
.hscroll { display: flex; margin-top: 7px; height: 15px; width: 458px; margin-left: 7px; background: #cfcfcf; justify-content: space-between; }
.hb { width: 14px; background: #fff; border: 1px solid #bdbdbd; display: flex; align-items: center; justify-content: center; flex: none; }
.hthumb { width: 401px; margin-right: auto; background: #fff; border: 1px solid #bdbdbd; border-left: 0; }

/* status */
.status { flex: 1; background: #f1f1f1; display: flex; align-items: center; font-size: 11px; color: #555; }
.ready { margin-left: 7px; width: 50px; }
.st { flex: none; white-space: nowrap; }
.s-avg { margin-left: 652px; width: 99px; }
.s-cnt { width: 66px; }
.s-sum { width: 87px; }
.vbtn { width: 38px; height: 16px; display: flex; align-items: center; justify-content: center; flex: none; }
.vbtn.on { background: #c6c6c6; }
.zm { width: 10px; margin-left: 5px; font-size: 13px; line-height: 15px; font-weight: 700; color: #555; }
.slider { width: 100px; height: 1px; background: #a8a8a8; margin-left: 3px; position: relative; }
.slider i { position: absolute; left: 46px; top: -5px; width: 3px; height: 11px; background: #666; }
.zp { margin-left: 2px; }
.s-pct { margin-left: 13px; }

/* dialog */
.dialog { position: absolute; left: 441px; top: 189px; width: 370px; height: 446px; z-index: 3; background: #f0f0f0; border: 1px solid #3d7fb3; box-shadow: 2px 5px 18px rgba(0,0,0,.32); display: flex; flex-direction: column; font-size: 11.300px; color: #333; }
.d-title { height: 30px; background: #fff; display: flex; align-items: center; padding: 0 18px 4px 8px; flex: none; color: #222; }
.d-name { flex: 1; }
.d-q { margin-right: 37px; font-size: 12px; }
.d-body { padding: 7px 10px 0 9px; flex: 1; display: flex; flex-direction: column; position: relative; }
.d-label { line-height: 17px; height: 17px; }
.d-range { margin-top: 5px; height: 22px; background: #fff; border: 1px solid #a6a6a6; display: flex; align-items: center; justify-content: space-between; padding: 0 2px 2px 3px; font-size: 11.500px; color: #222; }
.d-rbtn { width: 20px; height: 16px; background: #e6e6e6; display: flex; align-items: center; justify-content: center; border: 1px solid #d4d4d4; margin-top: 2px; }
.d-text { margin-top: 8px; display: flex; align-items: center; gap: 3px; padding-bottom: 2px; }
.d-addrow { height: 25px; margin-left: 1px; display: flex; align-items: center; gap: 7px; }
.d-input { width: 269px; height: 22px; background: #fff; border: 1px solid #3e7da6; }
.d-add { width: 70px; height: 25px; background: #c8c8c8; color: #e8e8e8; text-align: center; line-height: 24px; font-size: 11px; }
.d-group { margin: 10px 0 0 1px; padding: 0 6px 5px 5px; height: 257px; border: 1px solid #dcdcdc; min-width: 0; }
.d-group legend { padding: 0 2px; margin-left: 2px; line-height: 17px; }
.d-list { margin-top: 4px; height: 231px; background: #fff; border: 1px solid #a2a2a2; }
.d-row { height: 19px; display: flex; align-items: center; }
.d-row.hi { background: #dde6f4; border-top: 1px solid #e4e4e4; height: 20px; border-bottom: 1px solid #d0d6e0; }
.d-chk { width: 27px; height: 100%; display: flex; align-items: center; justify-content: center; border-right: 1px solid #e2e2e2; flex: none; padding-left: 1px; }
.d-val { flex: 1; padding-left: 7px; }
.d-pat { padding-left: 3px; }
.d-x { margin-right: 5px; }
.d-btns { margin-top: 11px; display: flex; justify-content: flex-end; gap: 8px; }
.d-btn { width: 85px; height: 24px; background: #e1e1e1; border: 1px solid #adadad; text-align: center; line-height: 21px; color: #222; font-size: 11.500px; }
.d-btn.primary { border: 2px solid #1f6fb2; line-height: 19px; }
.hilite { position: absolute; left: 280px; top: 82px; width: 88px; height: 88px; border-radius: 50%; background: #ffff00; mix-blend-mode: multiply; }
.num { position: absolute; width: 37px; height: 37px; border-radius: 50%; border: 3px solid #8a2a2a; background: radial-gradient(circle at 40% 35%, #fff 0, #f1f1f1 45%, #c4c4c4 100%); box-shadow: 0 0 0 1px #bbb, 2px 3px 4px rgba(0,0,0,.55); font: 17px/31px "DejaVu Sans", sans-serif; text-align: center; color: #111; }
.n1 { left: 79px; top: 100px; }
.n2 { left: 337px; top: 101px; }
.cursor { position: absolute; left: 322px; top: 124px; }

/* watermark */
.brand { position: absolute; left: 976px; top: 630px; z-index: 2; white-space: nowrap; font-family: "Open Sans", sans-serif; font-weight: 600; }
.b-url { display: block; font-size: 20px; line-height: 24px; letter-spacing: -.4px; color: #1a1ad0; text-decoration: underline; text-shadow: 1px 1px 2px rgba(0,0,60,.6); }
.b-sub { font-size: 20px; line-height: 24px; letter-spacing: -.3px; color: #000; text-shadow: 1px 1px 2px rgba(0,0,0,.6); }
```
